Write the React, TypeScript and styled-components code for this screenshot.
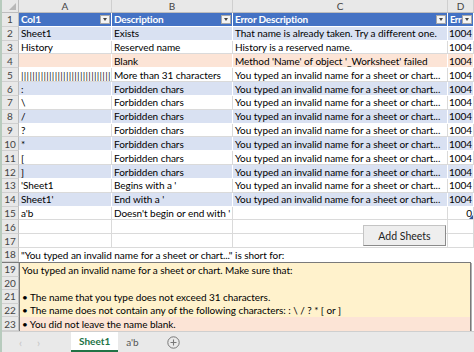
import React from "react";
import styled, { createGlobalStyle } from "styled-components";

const GlobalStyle = createGlobalStyle`
  html, body {
    margin: 0;
    padding: 0;
    background: #ffffff;
    overflow: hidden;
  }
  body {
    font-family: Lato, "Liberation Sans", sans-serif;
    font-size: 10px;
    letter-spacing: -0.05px;
    color: #000;
  }
`;

const ROW_H = "13.83px";
const COLS = "17px 93px 121px 215px 26px";

const Sheet = styled.div`
  width: 474px;
  height: 352px;
  display: flex;
  flex-direction: column;
  position: relative;
  border-left: 2px solid #b7cbbd;
  box-sizing: border-box;
`;

const Grid = styled.div`
  flex: 1;
  display: flex;
  flex-direction: column;
  overflow: hidden;
  position: relative;
`;

const HeaderRow = styled.div`
  display: grid;
  grid-template-columns: ${COLS};
  height: 13px;
  background: #e8e8e8;
  border-bottom: 1px solid #bdbdbd;
  box-sizing: border-box;
`;

const Corner = styled.div`
  position: relative;
  border-right: 1px solid #bdbdbd;
  &::after {
    content: "";
    position: absolute;
    right: 2px;
    bottom: 2px;
    border-style: solid;
    border-width: 0 0 7px 7px;
    border-color: transparent transparent #b8b8b8 transparent;
  }
`;

const ColLetter = styled.div`
  text-align: center;
  line-height: 12px;
  color: #444;
  letter-spacing: 0;
  border-right: 1px solid #cfcfcf;
`;

const Row = styled.div`
  display: grid;
  grid-template-columns: ${COLS};
  height: ${ROW_H};
  flex: none;
`;

const RowNum = styled.div`
  background: #e8e8e8;
  color: #444;
  font-size: 10px;
  letter-spacing: 0;
  display: flex;
  align-items: center;
  justify-content: center;
  border-right: 1px solid #bdbdbd;
  border-bottom: 1px solid #d0d0d0;
  box-sizing: border-box;
`;

const Cell = styled.div<{ $bg?: string; $line?: string; $right?: boolean; $head?: boolean }>`
  background: ${(p) => p.$bg || "#fff"};
  border-right: 1px solid ${(p) => p.$line || "#dadada"};
  border-bottom: 1px solid ${(p) => p.$line || "#dadada"};
  box-sizing: border-box;
  padding: 0 ${(p) => (p.$right || p.$head ? "1px" : "2px")};
  display: flex;
  align-items: center;
  justify-content: ${(p) => (p.$right ? "flex-end" : "space-between")};
  white-space: nowrap;
  overflow: hidden;
  position: relative;
  color: ${(p) => (p.$head ? "#fff" : "#000")};
  font-weight: ${(p) => (p.$head ? 700 : 400)};
`;

const HeadText = styled.span<{ $narrow?: boolean }>`
  min-width: 0;
  padding-left: 1px;
  font-size: ${(p) => (p.$narrow ? "9.5px" : "10px")};
  letter-spacing: ${(p) => (p.$narrow ? "-0.5px" : "-0.2px")};
`;

const Bars = styled.span`
  letter-spacing: 0.3px;
  color: #222;
`;

const Filter = styled.span`
  flex: none;
  width: 10px;
  height: 9px;
  background: #f4f4f4;
  border: 1px solid #a8a8a8;
  box-sizing: border-box;
  display: flex;
  align-items: center;
  justify-content: center;
  margin-left: 1px;
  &::after {
    content: "";
    border-style: solid;
    border-width: 3px 2.5px 0 2.5px;
    border-color: #444 transparent transparent transparent;
  }
`;

const ResizeMark = styled.span`
  position: absolute;
  right: 0;
  bottom: 0;
  border-style: solid;
  border-width: 0 0 4px 4px;
  border-color: transparent transparent #2f5597 transparent;
`;

const WideCell = styled.div`
  grid-column: 2 / -1;
  background: #fff;
  display: flex;
  align-items: center;
  padding: 0 2px;
  white-space: nowrap;
  overflow: hidden;
`;

const NoteBox = styled.div`
  display: flex;
  flex-direction: column;
  margin-right: 3px;
  border-top: 1px solid #7a7a7a;
  border-bottom: 1px solid #7a7a7a;
  box-shadow: 1px 1px 0 #b0b0b0;
`;

const NoteRow = styled.div`
  display: grid;
  grid-template-columns: 17px 1fr;
  height: 13.6px;
`;

const NoteText = styled.div<{ $bg: string }>`
  background: ${(p) => p.$bg};
  display: flex;
  align-items: center;
  padding: 0 2px;
  white-space: nowrap;
  overflow: hidden;
  border-left: 1px solid #7a7a7a;
  border-right: 1px solid #7a7a7a;
`;

const Button = styled.button`
  position: absolute;
  left: 361px;
  top: 225px;
  width: 83px;
  height: 21px;
  background: #eeeeee;
  border: 1px solid #c4c4c4;
  border-right-color: #8a8a8a;
  border-bottom-color: #8a8a8a;
  font-family: Lato, "Liberation Sans", sans-serif;
  font-size: 10.5px;
  color: #222;
  padding: 0;
`;

const TabBar = styled.div`
  height: 21px;
  flex: none;
  background: #e9e9e9;
  border-top: 1px solid #cfcfcf;
  display: flex;
  align-items: stretch;
  box-sizing: border-box;
  letter-spacing: 0;
`;

const Nav = styled.div`
  width: 69px;
  display: flex;
  align-items: center;
  gap: 15px;
  padding-left: 17px;
  color: #c4c4c4;
  font-size: 11px;
  box-sizing: border-box;
`;

const Tab = styled.div<{ $active?: boolean }>`
  padding: 0 8px;
  display: flex;
  align-items: center;
  justify-content: center;
  background: ${(p) => (p.$active ? "#fff" : "transparent")};
  color: ${(p) => (p.$active ? "#217346" : "#555")};
  font-weight: ${(p) => (p.$active ? 700 : 400)};
  border-bottom: ${(p) => (p.$active ? "2px solid #217346" : "none")};
  box-sizing: border-box;
  min-width: ${(p) => (p.$active ? "46px" : "auto")};
`;

const AddTab = styled.div`
  display: flex;
  align-items: center;
  margin-left: 20px;
`;

const band = ["#d9e1f2", "#ffffff"];
const PEACH = "#fce4d6";
const INVALID = "You typed an invalid name for a sheet or chart...";

type Item = { a: React.ReactNode; b: string; c: string; d: string; bg?: string };

const items: Item[] = [
  { a: "Sheet1", b: "Exists", c: "That name is already taken. Try a different one.", d: "1004" },
  { a: "History", b: "Reserved name", c: "History is a reserved name.", d: "1004" },
  { a: "", b: "Blank", c: "Method 'Name' of object '_Worksheet' failed", d: "1004", bg: PEACH },
  { a: <Bars>{"|".repeat(32)}</Bars>, b: "More than 31 characters", c: INVALID, d: "1004" },
  ...[":", "\\", "/", "?", "*", "[", "]"].map((a) => ({ a, b: "Forbidden chars", c: INVALID, d: "1004" })),
  { a: "'Sheet1", b: "Begins with a '", c: INVALID, d: "1004" },
  { a: "Sheet1'", b: "End with a '", c: INVALID, d: "1004" },
  { a: "a'b", b: "Doesn't begin or end with '", c: "", d: "0" },
];

const notes: { n: number; text: string; bg: string }[] = [
  { n: 19, text: "You typed an invalid name for a sheet or chart. Make sure that:", bg: "#fff2cc" },
  { n: 20, text: "", bg: "#fff2cc" },
  { n: 21, text: "\u2022 The name that you type does not exceed 31 characters.", bg: "#fff2cc" },
  { n: 22, text: "\u2022 The name does not contain any of the following characters:  :  \\  /  ?  *  [  or  ]", bg: "#fff2cc" },
  { n: 23, text: "\u2022 You did not leave the name blank.", bg: PEACH },
];

const PlusIcon = () => (
  <svg width="13" height="13" viewBox="0 0 13 13">
    <circle cx="6.5" cy="6.5" r="5.7" fill="none" stroke="#777" strokeWidth="1" />
    <path d="M6.5 3.5v6M3.5 6.5h6" stroke="#777" strokeWidth="1.1" />
  </svg>
);

export default function App() {
  return (
    <Sheet>
      <GlobalStyle />
      <Grid>
        <HeaderRow>
          <Corner />
          {["A", "B", "C", "D"].map((l) => (
            <ColLetter key={l}>{l}</ColLetter>
          ))}
        </HeaderRow>

        <Row>
          <RowNum>1</RowNum>
          {["Col1", "Description", "Error Description", "Err"].map((h) => (
            <Cell key={h} $head $bg="#4472c4" $line="#ffffff">
              <HeadText $narrow={h === "Err"}>{h}</HeadText>
              <Filter />
            </Cell>
          ))}
        </Row>

        {items.map((it, i) => {
          const bg = it.bg || band[i % 2];
          const line = bg === "#ffffff" ? "#dadada" : "#ffffff";
          return (
            <Row key={i}>
              <RowNum>{i + 2}</RowNum>
              <Cell $bg={bg} $line={line}>{it.a}</Cell>
              <Cell $bg={bg} $line={line}>{it.b}</Cell>
              <Cell $bg={bg} $line={line}>{it.c}</Cell>
              <Cell $bg={bg} $line={line} $right>
                {it.d}
                {i === items.length - 1 && <ResizeMark />}
              </Cell>
            </Row>
          );
        })}

        {[16, 17].map((n) => (
          <Row key={n}>
            <RowNum>{n}</RowNum>
            <Cell />
            <Cell />
            <Cell />
            <Cell />
          </Row>
        ))}

        <Row>
          <RowNum>18</RowNum>
          <WideCell>"You typed an invalid name for a sheet or chart..." is short for:</WideCell>
        </Row>

        <NoteBox>
          {notes.map((r) => (
            <NoteRow key={r.n}>
              <RowNum>{r.n}</RowNum>
              <NoteText $bg={r.bg}>{r.text}</NoteText>
            </NoteRow>
          ))}
        </NoteBox>

        <Button>Add Sheets</Button>
      </Grid>

      <TabBar>
        <Nav>
          <span>&#8249;</span>
          <span>&#8250;</span>
        </Nav>
        <Tab $active>Sheet1</Tab>
        <Tab>a'b</Tab>
        <AddTab>
          <PlusIcon />
        </AddTab>
      </TabBar>
    </Sheet>
  );
}
